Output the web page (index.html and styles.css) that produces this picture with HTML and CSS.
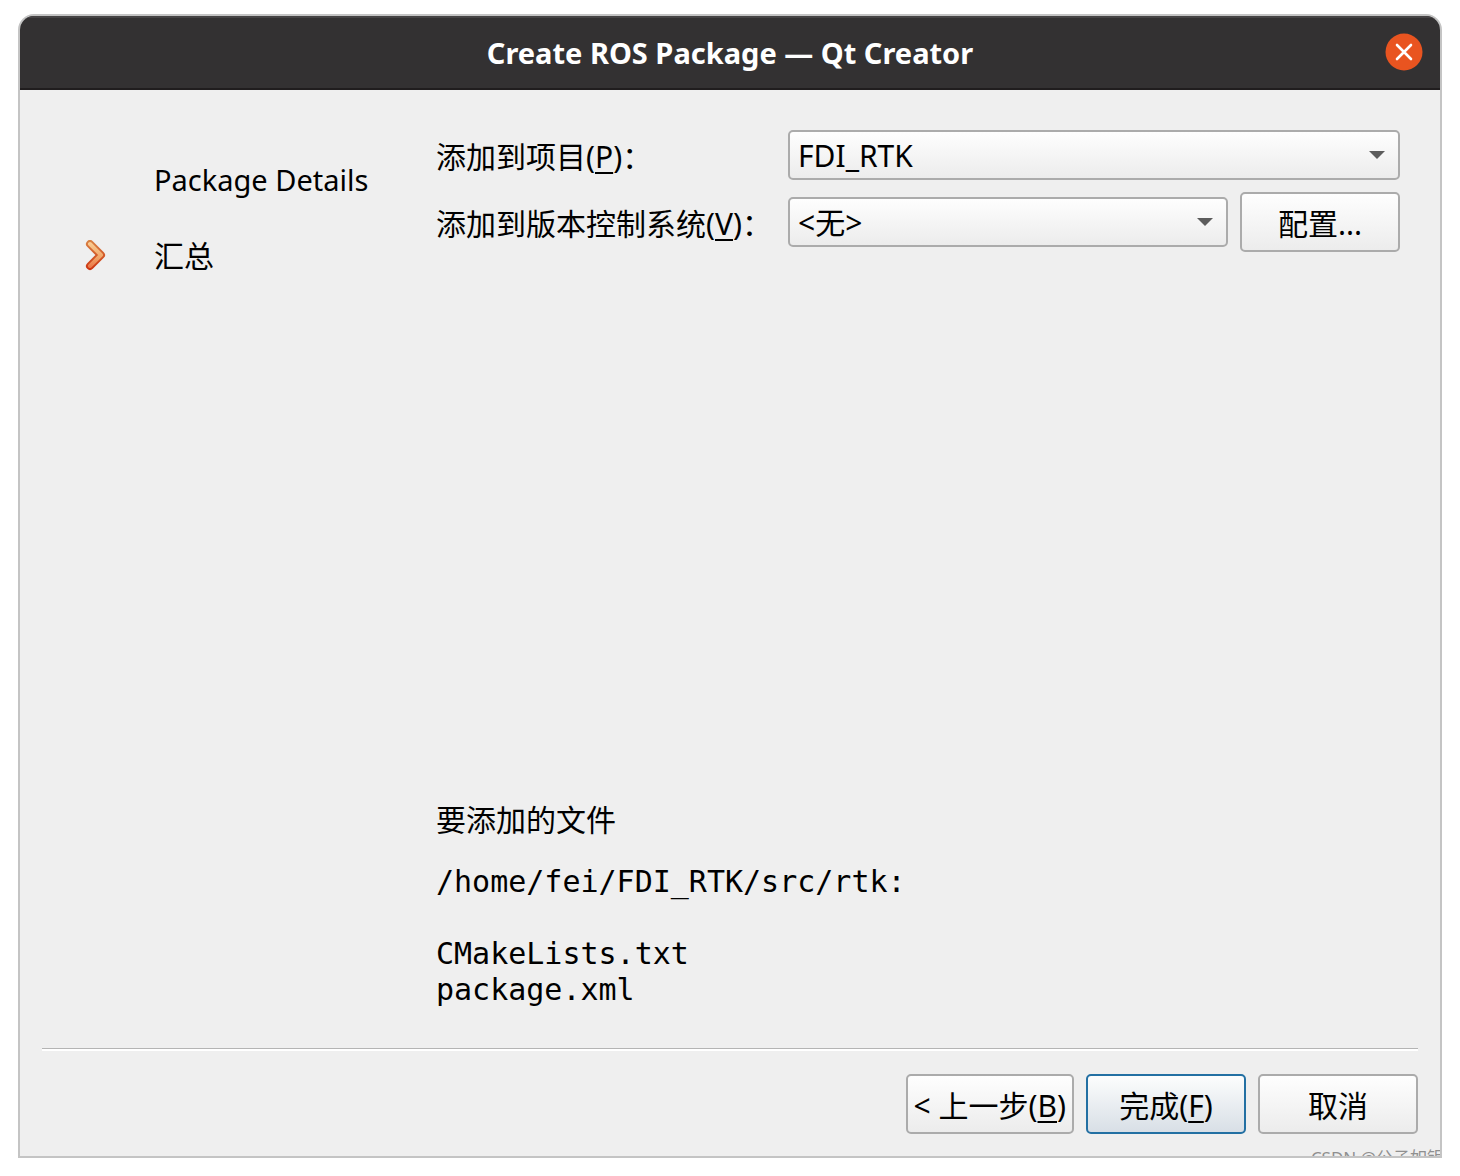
FILE: index.html
```
<!DOCTYPE html>
<html lang="zh-CN">
<head>
    <meta charset="UTF-8">
    <meta name="viewport" content="width=device-width, initial-scale=1.0">
    <title>Create ROS Package — Qt Creator</title>
    <link rel="stylesheet" href="styles.css">
</head>
<body>

    <div class="window">
        <header class="titlebar">
            <h1>Create ROS Package — Qt Creator</h1>
            <button class="close" type="button" aria-label="Close">
                <svg viewBox="0 0 38 38" width="38" height="38">
                    <circle cx="19" cy="19" r="18.5" fill="#e95420" />
                    <path d="M12 12 L26 26 M26 12 L12 26" stroke="#fff" stroke-width="2.6" stroke-linecap="round" />
                </svg>
            </button>
        </header>

        <main class="content">
            <ol class="steps">
                <li>Package Details</li>
                <li class="current">
                    <svg class="arrow" viewBox="0 0 22 32" width="22" height="32">
                        <defs>
                            <linearGradient id="edge" gradientUnits="userSpaceOnUse" x1="0" y1="0" x2="0" y2="32">
                                <stop offset="0" stop-color="#d98345" />
                                <stop offset="1" stop-color="#cb2e0c" />
                            </linearGradient>
                            <linearGradient id="fill" gradientUnits="userSpaceOnUse" x1="0" y1="0" x2="0" y2="32">
                                <stop offset="0" stop-color="#fbd49a" />
                                <stop offset="0.55" stop-color="#f0a468" />
                                <stop offset="1" stop-color="#e8623a" />
                            </linearGradient>
                        </defs>
                        <path d="M6 4 L17 15 L6 26" fill="none" stroke="url(#edge)" stroke-width="8" stroke-linecap="round" stroke-linejoin="round" />
                        <path d="M6 4 L17 15 L6 26" fill="none" stroke="url(#fill)" stroke-width="4" stroke-linecap="round" stroke-linejoin="round" />
                    </svg>
                    汇总
                </li>
            </ol>

            <section class="page">
                <form class="form">
                    <label for="project">添加到项目(<u>P</u>)：</label>
                    <div class="row">
                        <div class="combo">
                            <select id="project">
                                <option>FDI_RTK</option>
                            </select>
                        </div>
                    </div>
                    <label for="vcs">添加到版本控制系统(<u>V</u>)：</label>
                    <div class="row">
                        <div class="combo">
                            <select id="vcs">
                                <option>&lt;无&gt;</option>
                            </select>
                        </div>
                        <button class="btn" type="button">配置...</button>
                    </div>
                </form>

                <div class="files">
                    <h2>要添加的文件</h2>
                    <pre>/home/fei/FDI_RTK/src/rtk:

CMakeLists.txt
package.xml</pre>
                </div>
            </section>
        </main>

        <footer class="footer">
            <button class="btn back" type="button">&lt; 上一步(<u>B</u>)</button>
            <button class="btn default" type="button">完成(<u>F</u>)</button>
            <button class="btn" type="button">取消</button>
        </footer>

        <div class="watermark">CSDN @公子如钜</div>
    </div>

</body>
</html>
```
FILE: styles.css
```
* {
    box-sizing: border-box;
}
body {
    margin: 0;
    padding: 14px 18px 18px;
    min-height: 100vh;
    display: flex;
    background: #fff;
    color: #000;
    font-family: "Noto Sans", "Noto Sans CJK SC", sans-serif;
    font-size: 30px;
    line-height: 40px;
}
h1, h2, pre, ol {
    margin: 0;
    padding: 0;
    font-size: inherit;
}
button, select {
    font: inherit;
    color: inherit;
}
u {
    text-decoration-thickness: 2px;
    text-underline-offset: 4px;
}
.window {
    position: relative;
    flex: 1;
    display: flex;
    flex-direction: column;
    overflow: hidden;
    background: #efefef;
    border: 2px solid #c4c4c4;
    border-radius: 16px 16px 0 0;
}

/* title bar */
.titlebar {
    display: grid;
    grid-template-columns: 1fr auto 1fr;
    align-items: center;
    height: 74px;
    padding: 0 17px;
    background: #333132;
    border-top: 2px solid #454344;
    border-bottom: 2px solid #201d1e;
    color: #fff;
}
.titlebar h1 {
    grid-column: 2;
    font-size: 29px;
    font-weight: 700;
}
.close {
    justify-self: end;
    width: 38px;
    height: 38px;
    margin-bottom: 2px;
    padding: 0;
    border: 0;
    background: none;
    cursor: pointer;
}
.close svg {
    display: block;
}

/* wizard body */
.content {
    flex: 1;
    display: grid;
    grid-template-columns: 352px 1fr;
    padding: 40px 40px 40px 64px;
}
.steps {
    list-style: none;
    padding-top: 30px;
}
.steps li {
    display: flex;
    align-items: center;
    height: 40px;
    margin-bottom: 36px;
    padding-left: 70px;
    font-size: 29px;
}
.steps .current {
    padding-left: 0;
    font-size: 30px;
}
.arrow {
    margin-right: 48px;
}
.page {
    display: flex;
    flex-direction: column;
}
.form {
    display: grid;
    grid-template-columns: 352px 1fr;
    row-gap: 12px;
    align-items: center;
}
.form label {
    padding-top: 4px;
}
.row {
    display: flex;
    align-items: center;
    gap: 12px;
}
.combo {
    position: relative;
    flex: 1;
}
.combo::after {
    content: "";
    position: absolute;
    right: 15px;
    top: 21px;
    border: 8px solid transparent;
    border-top-color: #5c5c5c;
    border-bottom: 0;
    pointer-events: none;
}
.combo select {
    display: block;
    appearance: none;
    width: 100%;
    height: 50px;
    padding: 2px 40px 0 8px;
}
.combo select, .btn {
    border: 2px solid #ababab;
    border-radius: 5px;
    background: linear-gradient(#fefefe, #ececec);
}
.btn {
    min-width: 160px;
    height: 60px;
    padding: 4px 6px 0;
    white-space: nowrap;
    cursor: pointer;
}
.default {
    border-color: #2370a3;
    background: linear-gradient(#fcfdfd, #d8dfe6);
}
.files {
    margin-top: auto;
}
.files h2 {
    margin-bottom: 24px;
    font-weight: 400;
}
.files pre {
    font-family: "DejaVu Sans Mono", monospace;
    line-height: 36px;
}

/* button row */
.footer {
    display: flex;
    justify-content: flex-end;
    gap: 12px;
    margin: 0 22px;
    padding: 25px 0 22px;
    border-top: 1px solid #b4b4b4;
    box-shadow: inset 0 2px #fff;
}
.back {
    min-width: 168px;
}
.watermark {
    position: absolute;
    right: -4px;
    bottom: -14px;
    color: #8f8f8f;
    font-size: 17px;
    line-height: 24px;
    white-space: nowrap;
}
```
